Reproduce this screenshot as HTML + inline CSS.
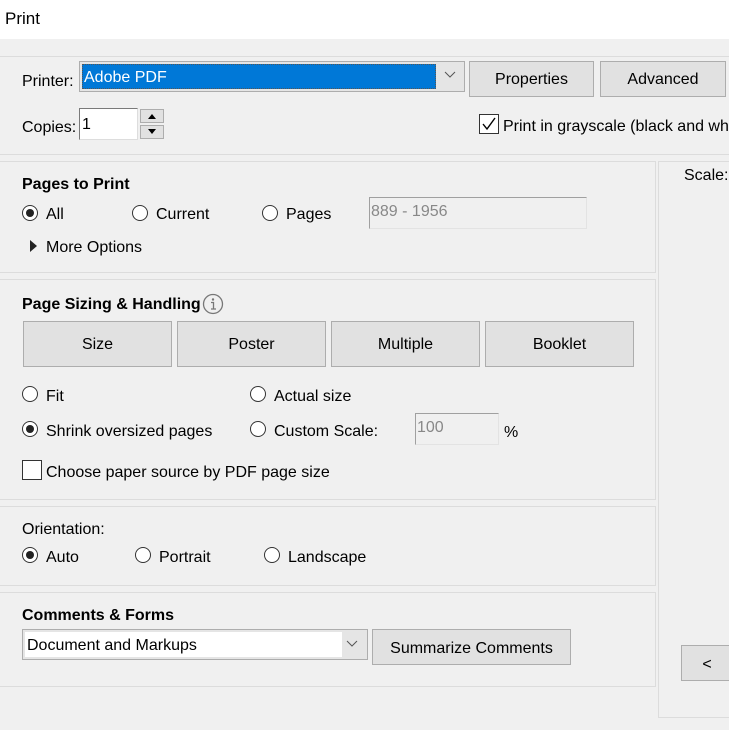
<!DOCTYPE html>
<html><head><style>
*{box-sizing:border-box;margin:0;padding:0}
body{width:729px;height:730px;background:#f0f0f0;font-family:"Liberation Sans",sans-serif;font-size:16px;color:#000;position:relative;overflow:hidden}
.a{position:absolute;white-space:nowrap}
.t{position:absolute;white-space:nowrap;line-height:20px;margin-top:2px}
.panel{position:absolute;border:1px solid #dcdcdc}
.btn{position:absolute;background:#e1e1e1;border:1px solid #adadad;text-align:center;white-space:nowrap}
.r{position:absolute;width:16px;height:16px;border:1px solid #333;border-radius:50%;background:#fff;margin-top:-1px}
.r.on::after{content:"";position:absolute;left:3px;top:3px;width:8px;height:8px;border-radius:50%;background:#222}
.in{position:absolute;border:1px solid #a0a0a0;border-right-color:#e3e3e3;border-bottom-color:#e3e3e3;color:#888;padding-left:1px;line-height:28px}
b{font-weight:bold}
</style></head><body>
<div class="a" style="left:0;top:0;width:729px;height:39px;background:#fff"></div>
<div class="t" style="left:5px;top:7px;font-size:17px">Print</div>

<div class="panel" style="left:-1px;top:56px;width:740px;height:99px"></div>
<div class="t" style="left:22px;top:70px">Printer:</div>
<div class="a" style="left:79px;top:61px;width:386px;height:31px;background:#e5e5e5;border:1px solid #adadad"></div>
<div class="a" style="left:82px;top:64px;width:354px;height:25px;background:#0078d7;border:1px dotted #555"></div>
<div class="t" style="left:84px;top:66px;color:#fff">Adobe PDF</div>
<svg class="a" style="left:444px;top:71px" width="12" height="8"><path d="M1 1 L6 6 L11 1" stroke="#555" fill="none"/></svg>
<div class="btn" style="left:469px;top:61px;width:125px;height:36px;line-height:36px">Properties</div>
<div class="btn" style="left:600px;top:61px;width:126px;height:36px;line-height:36px">Advanced</div>

<div class="t" style="left:22px;top:116px">Copies:</div>
<div class="a" style="left:79px;top:108px;width:59px;height:32px;background:#fff;border:1px solid #7a7a7a;border-right-color:#ddd;border-bottom-color:#ddd"></div>
<div class="t" style="left:82px;top:113px">1</div>
<div class="btn" style="left:140px;top:109px;width:24px;height:14px"></div>
<div class="btn" style="left:140px;top:125px;width:24px;height:14px"></div>
<svg class="a" style="left:146px;top:112px" width="12" height="24"><path d="M2 7 L6 2 L10 7Z M2 17 L10 17 L6 22Z" fill="#000"/></svg>
<div class="a" style="left:479px;top:114px;width:20px;height:20px;background:#fff;border:1px solid #333"></div>
<svg class="a" style="left:481px;top:116px" width="16" height="16"><path d="M2 8 L6 13 L14 2" stroke="#000" stroke-width="1.4" fill="none"/></svg>
<div class="t" style="left:503px;top:115px">Print in grayscale (black and white)</div>

<div class="panel" style="left:-1px;top:161px;width:657px;height:112px"></div>
<div class="panel" style="left:658px;top:161px;width:80px;height:557px"></div>
<div class="t" style="left:684px;top:164px">Scale:</div>
<div class="t" style="left:22px;top:173px"><b>Pages to Print</b></div>
<div class="r on" style="left:22px;top:206px"></div><div class="t" style="left:46px;top:203px">All</div>
<div class="r" style="left:132px;top:206px"></div><div class="t" style="left:156px;top:203px">Current</div>
<div class="r" style="left:262px;top:206px"></div><div class="t" style="left:286px;top:203px">Pages</div>
<div class="in" style="left:369px;top:197px;width:218px;height:32px">889 - 1956</div>
<svg class="a" style="left:30px;top:240px" width="8" height="12"><path d="M0 0 L7 6 L0 12Z" fill="#222"/></svg>
<div class="t" style="left:46px;top:236px">More Options</div>

<div class="panel" style="left:-1px;top:279px;width:657px;height:221px"></div>
<div class="t" style="left:22px;top:293px"><b>Page Sizing &amp; Handling</b></div>
<svg class="a" style="left:202px;top:293px" width="22" height="22"><circle cx="11" cy="11" r="9.5" stroke="#777" stroke-width="1.3" fill="none"/><circle cx="11" cy="6.5" r="1.2" fill="#777"/><path d="M9 9.5 H11.5 V16 M9 16 H14" stroke="#777" stroke-width="1.3" fill="none"/></svg>
<div class="btn" style="left:23px;top:321px;width:149px;height:46px;line-height:46px">Size</div>
<div class="btn" style="left:177px;top:321px;width:149px;height:46px;line-height:46px">Poster</div>
<div class="btn" style="left:331px;top:321px;width:149px;height:46px;line-height:46px">Multiple</div>
<div class="btn" style="left:485px;top:321px;width:149px;height:46px;line-height:46px">Booklet</div>
<div class="r" style="left:22px;top:387px"></div><div class="t" style="left:46px;top:385px">Fit</div>
<div class="r" style="left:250px;top:387px"></div><div class="t" style="left:274px;top:385px">Actual size</div>
<div class="r on" style="left:22px;top:422px"></div><div class="t" style="left:46px;top:420px">Shrink oversized pages</div>
<div class="r" style="left:250px;top:422px"></div><div class="t" style="left:274px;top:420px">Custom Scale:</div>
<div class="in" style="left:415px;top:413px;width:84px;height:32px">100</div>
<div class="t" style="left:504px;top:421px">%</div>
<div class="a" style="left:22px;top:460px;width:20px;height:20px;background:#fff;border:1px solid #333"></div>
<div class="t" style="left:46px;top:461px">Choose paper source by PDF page size</div>

<div class="panel" style="left:-1px;top:506px;width:657px;height:80px"></div>
<div class="t" style="left:22px;top:518px">Orientation:</div>
<div class="r on" style="left:22px;top:548px"></div><div class="t" style="left:46px;top:546px">Auto</div>
<div class="r" style="left:135px;top:548px"></div><div class="t" style="left:159px;top:546px">Portrait</div>
<div class="r" style="left:264px;top:548px"></div><div class="t" style="left:288px;top:546px">Landscape</div>

<div class="panel" style="left:-1px;top:592px;width:657px;height:95px"></div>
<div class="t" style="left:22px;top:604px"><b>Comments &amp; Forms</b></div>
<div class="a" style="left:22px;top:629px;width:346px;height:31px;background:#e5e5e5;border:1px solid #adadad"></div>
<div class="a" style="left:25px;top:632px;width:317px;height:25px;background:#fff"></div>
<div class="t" style="left:27px;top:634px">Document and Markups</div>
<svg class="a" style="left:346px;top:640px" width="12" height="8"><path d="M1 1 L6 6 L11 1" stroke="#555" fill="none"/></svg>
<div class="btn" style="left:372px;top:629px;width:199px;height:36px;line-height:38px">Summarize Comments</div>
<div class="btn" style="left:681px;top:645px;width:52px;height:36px;line-height:38px">&lt;</div>
</body></html>
